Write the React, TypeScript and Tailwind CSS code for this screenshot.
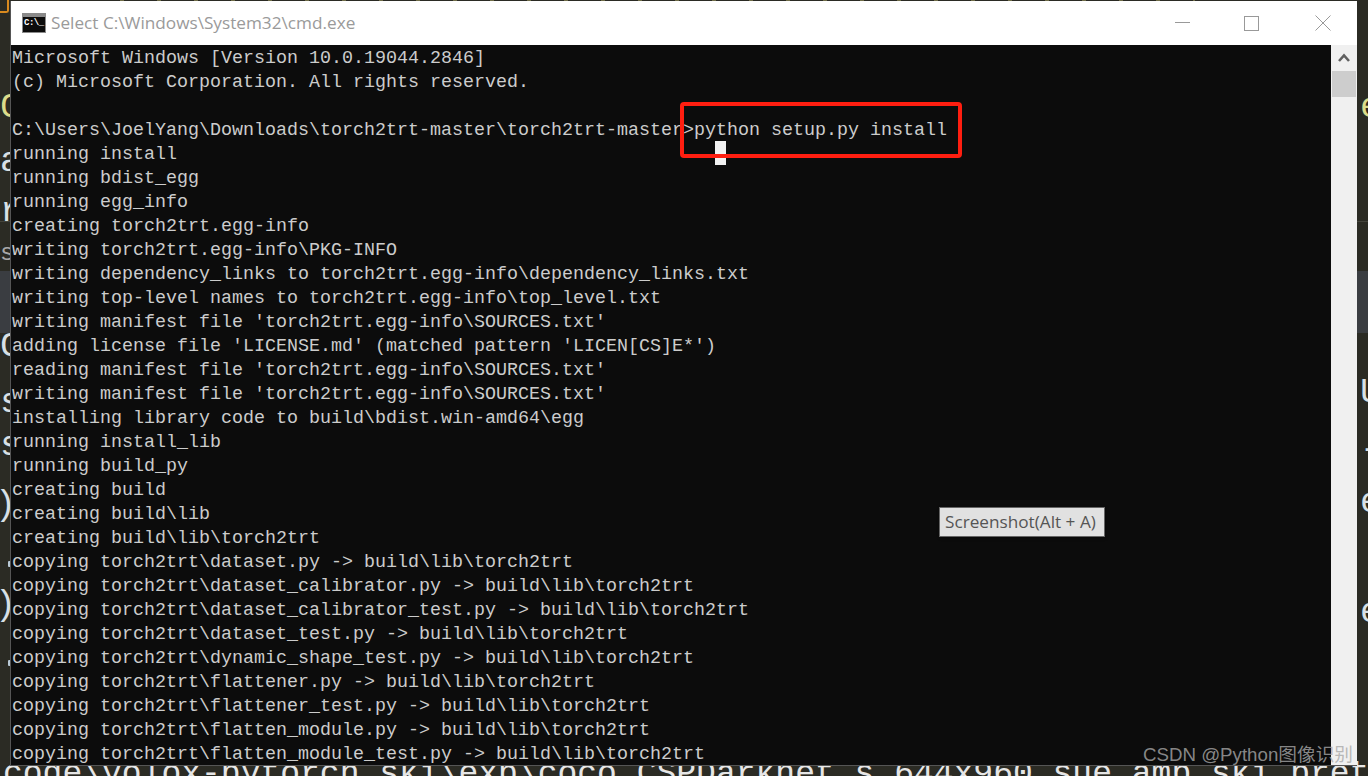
import React from "react";

const lines = [
  "Microsoft Windows [Version 10.0.19044.2846]",
  "(c) Microsoft Corporation. All rights reserved.",
  "",
  "C:\\Users\\JoelYang\\Downloads\\torch2trt-master\\torch2trt-master>python setup.py install",
  "running install",
  "running bdist_egg",
  "running egg_info",
  "creating torch2trt.egg-info",
  "writing torch2trt.egg-info\\PKG-INFO",
  "writing dependency_links to torch2trt.egg-info\\dependency_links.txt",
  "writing top-level names to torch2trt.egg-info\\top_level.txt",
  "writing manifest file 'torch2trt.egg-info\\SOURCES.txt'",
  "adding license file 'LICENSE.md' (matched pattern 'LICEN[CS]E*')",
  "reading manifest file 'torch2trt.egg-info\\SOURCES.txt'",
  "writing manifest file 'torch2trt.egg-info\\SOURCES.txt'",
  "installing library code to build\\bdist.win-amd64\\egg",
  "running install_lib",
  "running build_py",
  "creating build",
  "creating build\\lib",
  "creating build\\lib\\torch2trt",
  "copying torch2trt\\dataset.py -> build\\lib\\torch2trt",
  "copying torch2trt\\dataset_calibrator.py -> build\\lib\\torch2trt",
  "copying torch2trt\\dataset_calibrator_test.py -> build\\lib\\torch2trt",
  "copying torch2trt\\dataset_test.py -> build\\lib\\torch2trt",
  "copying torch2trt\\dynamic_shape_test.py -> build\\lib\\torch2trt",
  "copying torch2trt\\flattener.py -> build\\lib\\torch2trt",
  "copying torch2trt\\flattener_test.py -> build\\lib\\torch2trt",
  "copying torch2trt\\flatten_module.py -> build\\lib\\torch2trt",
  "copying torch2trt\\flatten_module_test.py -> build\\lib\\torch2trt",
];

const mono = "font-['Liberation_Mono',monospace]";

function Backdrop() {
  return (
    <>
      <div className="flex flex-col">
        <div className="h-[222px] border-b border-[#44443c]" />
        <div className="h-[49px]" />
        <div className="h-[62px] bg-[#3a3d41]" />
      </div>
      {/* tips of the editor's code just above the window */}
      <div className="absolute left-[120px] top-0 h-[1px] w-[1075px] bg-[repeating-linear-gradient(90deg,#6f6c48_0px,#6f6c48_4px,transparent_4px,transparent_37px)]" />
      {/* editor text that peeks out on the left of the window */}
      <div className={`absolute left-0 top-0 flex w-[11px] flex-col items-end overflow-hidden text-[35px] text-[#d8e0e6] ${mono}`}>
        <div className="h-[88px]" />
        <div className="h-[40px] w-[11px] whitespace-pre leading-[40px] text-[#dcdc8b]">C</div>
        <div className="h-[14px]" />
        <div className="h-[40px] w-[11px] leading-[40px]">a</div>
        <div className="h-[10px]" />
        <div className="h-[40px] w-[11px] leading-[40px]">r</div>
        <div className="h-[4px]" />
        <div className="h-[36px] w-[11px] text-[24px] leading-[36px] text-[#a8a8a8]">s</div>
        <div className="h-[55px]" />
        <div className="h-[40px] w-[11px] leading-[40px]">C</div>
        <div className="h-[16px]" />
        <div className="h-[40px] w-[11px] leading-[40px]">s</div>
        <div className="h-[3px]" />
        <div className="h-[40px] w-[11px] leading-[40px]">s</div>
        <div className="h-[20px]" />
        <div className="h-[40px] w-[16px] leading-[40px]">)</div>
        <div className="h-[35px]" />
        <div className="h-[6px] w-[3px] rounded-[1px] bg-[#b9c9d6]" />
        <div className="h-[19px]" />
        <div className="h-[40px] w-[16px] leading-[40px]">)</div>
        <div className="h-[34px]" />
        <div className="h-[6px] w-[3px] rounded-[1px] bg-[#b9c9d6]" />
      </div>
      <div className={`absolute right-0 top-0 flex w-[11px] flex-col overflow-hidden text-[35px] text-[#d8e0e6] ${mono}`}>
        <div className="h-[88px]" />
        <div className="h-[40px] w-[30px] whitespace-pre pl-[3px] leading-[40px] text-[#dcdc8b]">e</div>
        <div className="h-[245px]" />
        <div className="h-[40px] w-[30px] whitespace-pre pl-[3px] leading-[40px]">U</div>
        <div className="h-[17px]" />
        <div className="h-[40px] w-[30px] whitespace-pre pl-[3px] leading-[40px]">-</div>
        <div className="h-[13px]" />
        <div className="h-[40px] w-[30px] whitespace-pre pl-[3px] leading-[40px]">e</div>
        <div className="h-[70px]" />
        <div className="h-[40px] w-[30px] whitespace-pre pl-[3px] leading-[40px]">e</div>
      </div>
      <div className={`absolute left-[3px] top-[755px] whitespace-pre text-[33px] leading-[40px] text-[#e6e6e6] ${mono}`}>
        {"code\\yolox-pytorch_ski\\exp\\coco_CSPDarknet_s_644x960_sue_amp_ski_pret"}
      </div>
      <div className="absolute left-0 top-0 h-[13px] w-[9px] rounded-br-[3px] border-b-2 border-r-2 border-[#d98a1e]" />
    </>
  );
}

function CmdIcon() {
  return (
    <div className="flex h-[20px] w-[24px] flex-col border border-[#8a8a8a] bg-[#8a8a8a]">
      <div className="h-[3px] shrink-0" />
      <div className={`flex-1 overflow-hidden whitespace-pre bg-[#0c0c0c] pl-[1px] text-[9px] font-bold leading-[13px] tracking-[-0.5px] text-white ${mono}`}>{"C:\\_"}</div>
    </div>
  );
}

function TitleBar() {
  return (
    <div className="flex h-[44px] shrink-0 items-center bg-white">
      <div className="ml-[11px]"><CmdIcon /></div>
      <div className="ml-[5px] whitespace-pre font-['Open_Sans',sans-serif] text-[17.2px] text-[#9a9a9a]">{"Select C:\\Windows\\System32\\cmd.exe"}</div>
      <div className="ml-auto flex items-center text-[#999999]">
        <svg width="16" height="2" viewBox="0 0 16 2" className="mr-[53px]"><rect width="15" height="1" fill="currentColor" /></svg>
        <svg width="15" height="15" viewBox="0 0 15 15" className="mr-[56px]"><rect x="0.5" y="0.5" width="14" height="14" fill="none" stroke="currentColor" /></svg>
        <svg width="16" height="16" viewBox="0 0 16 16" className="mr-[26px]"><path d="M0.5 0.5L15.5 15.5M15.5 0.5L0.5 15.5" fill="none" stroke="currentColor" /></svg>
      </div>
    </div>
  );
}

function Scrollbar() {
  return (
    <div className="flex w-[26px] shrink-0 flex-col items-center bg-[#f0f0f0]">
      <div className="flex h-[26px] items-center justify-center">
        <svg width="12" height="10" viewBox="0 0 12 10"><path d="M1 8L6 2.5L11 8" fill="none" stroke="#606060" strokeWidth="2.6" /></svg>
      </div>
      <div className="h-[26px] w-[24px] bg-[#cdcdcd]" />
    </div>
  );
}

export default function App() {
  return (
    <div className="relative h-[776px] w-[1368px] overflow-hidden bg-[#2b2b24]">
      <Backdrop />
      {/* console window, sitting on the desktop */}
      <div className="absolute left-[10px] top-[1px] flex h-[765px] w-[1347px] flex-col border-b border-l border-[#555555]">
        <TitleBar />
        <div className="flex min-h-0 flex-1">
          <div className={`min-w-0 flex-1 overflow-hidden bg-[#0c0c0c] pl-[1px] pt-[2px] text-[18.33px] leading-[24px] text-[#cccccc] ${mono}`}>
            {lines.map((l, i) => (
              <div key={i} className="h-[24px] whitespace-pre">{l}</div>
            ))}
          </div>
          <Scrollbar />
        </div>
      </div>
      {/* annotations over the window */}
      <div className="absolute left-[715px] top-[141px] h-[24px] w-[11px] bg-[#f2f2f2]" />
      <div className="absolute left-[680px] top-[102px] h-[56px] w-[282px] rounded-[4px] border-[4px] border-[#ff1e10]" />
      <div className="absolute left-[939px] top-[507px] flex h-[30px] w-[166px] items-center border border-[#666666] bg-[#e1e1e1] pl-[5px] font-['Open_Sans',sans-serif] text-[17.2px] text-[#555555] shadow-[1px_1px_3px_rgba(0,0,0,0.4)]">
        Screenshot(Alt + A)
      </div>
      <div className="absolute left-[1143px] top-[743px] whitespace-pre font-['Liberation_Sans','Noto_Sans_CJK_SC',sans-serif] text-[18.7px] leading-[24px] text-[#a8a8a8]/80">
        CSDN @Python图像识别
      </div>
    </div>
  );
}
